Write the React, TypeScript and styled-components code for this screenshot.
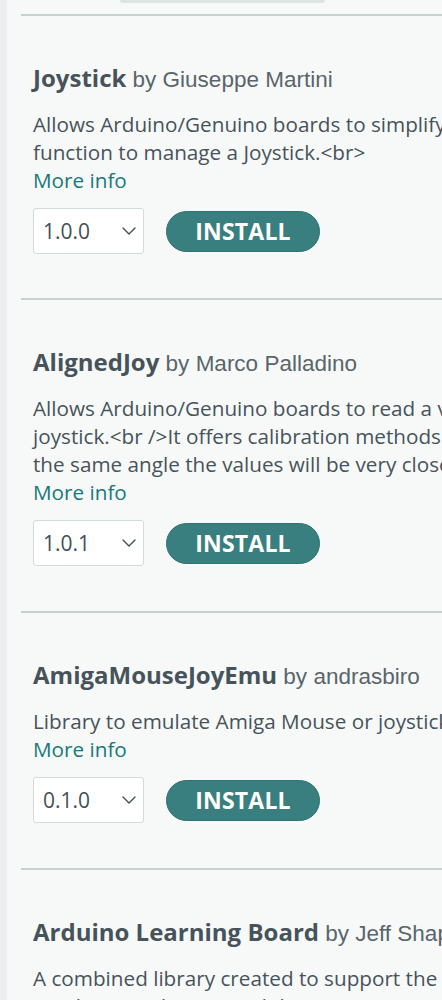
import React from "react";
import styled, { createGlobalStyle } from "styled-components";

const GlobalStyle = createGlobalStyle`
  html, body {
    margin: 0;
    padding: 0;
    background: #f7f9f9;
    overflow: hidden;
  }
  body {
    font-family: "Open Sans", "Liberation Sans", sans-serif;
    -webkit-font-smoothing: antialiased;
  }
`;

const Page = styled.div`
  display: flex;
  min-height: 1000px;
  width: 442px;
  overflow: hidden;
`;

const SideStrip = styled.div`
  width: 7px;
  flex: 0 0 7px;
  background: #ebeff0;
`;

const Main = styled.div`
  flex: 1;
  min-width: 0;
  padding-left: 14px;
  overflow: hidden;
`;

const TopArea = styled.div`
  height: 14px;
  padding-left: 99px;
`;

const TopStub = styled.div`
  width: 205px;
  height: 3px;
  background: #dde4e4;
  border-radius: 0 0 4px 4px;
`;

const Entry = styled.section<{ $extra?: number }>`
  border-top: 2px solid #c9d0d0;
  padding: 46px 0 ${(p) => 44 + (p.$extra ?? 0)}px 12px;
`;

const Title = styled.div`
  font-family: "Open Sans", sans-serif;
  font-weight: 700;
  font-size: 24px;
  line-height: 32px;
  color: #47535a;
  white-space: nowrap;
`;

const Author = styled.span`
  font-family: "Liberation Sans", Arial, sans-serif;
  font-weight: 400;
  font-size: 22.5px;
  line-height: 1;
  color: #59656a;
`;

const Description = styled.div`
  margin-top: 16px;
  font-family: "Open Sans", sans-serif;
  font-size: 20.7px;
  line-height: 28px;
  color: #47535a;
  white-space: nowrap;
`;

const DescLine = styled.span`
  display: block;
`;

const MoreInfo = styled.a`
  display: block;
  width: max-content;
  font-family: "Open Sans", sans-serif;
  font-size: 20.7px;
  line-height: 28px;
  color: #17797b;
  text-decoration: none;
  cursor: pointer;
`;

const Controls = styled.div`
  margin-top: 14px;
  display: flex;
  align-items: center;
  gap: 22px;
`;

const VersionSelect = styled.div`
  box-sizing: border-box;
  width: 111px;
  height: 46px;
  display: flex;
  align-items: center;
  justify-content: space-between;
  padding: 0 7px 0 9px;
  background: #ffffff;
  border: 1px solid #d4dbdb;
  border-radius: 3px;
  font-family: "Open Sans", sans-serif;
  font-size: 21px;
  color: #434f54;
`;

const Chevron = styled.svg`
  width: 14px;
  height: 8px;
  flex: 0 0 auto;
`;

const InstallButton = styled.button`
  box-sizing: border-box;
  width: 154px;
  height: 41px;
  border-radius: 21px;
  border: 1px solid #2e7273;
  background: #3a7f80;
  color: #ffffff;
  font-family: "Open Sans", sans-serif;
  font-weight: 700;
  font-size: 23px;
  letter-spacing: 0.2px;
  padding: 0;
  cursor: pointer;
`;

type Lib = {
  name: string;
  author: string;
  lines: string[];
  version: string;
  extra?: number;
};

const libs: Lib[] = [
  {
    name: "Joystick",
    author: "Giuseppe Martini",
    lines: [
      "Allows Arduino/Genuino boards to simplify the use of a joystick. A simple",
      "function to manage a Joystick.<br>",
    ],
    version: "1.0.0",
  },
  {
    name: "AlignedJoy",
    author: "Marco Palladino",
    lines: [
      "Allows Arduino/Genuino boards to read a value from a joystick",
      "joystick.<br />It offers calibration methods so that when moved to",
      "the same angle the values will be very close to each other.",
    ],
    version: "1.0.1",
    extra: 1,
  },
  {
    name: "AmigaMouseJoyEmu",
    author: "andrasbiro",
    lines: ["Library to emulate Amiga Mouse or joystick with an Arduino."],
    version: "0.1.0",
    extra: 1,
  },
  {
    name: "Arduino Learning Board",
    author: "Jeff Shapiro",
    lines: [
      "A combined library created to support the Arduino Learning Board.",
      "Display, I2C Shapes, and the 8 Digit LED Tones",
    ],
    version: "1.0.0",
  },
];

const ChevronIcon = () => (
  <Chevron viewBox="0 0 14 8" fill="none">
    <polyline
      points="1,1 7,7 13,1"
      stroke="#434f54"
      strokeWidth="1.4"
      strokeLinecap="round"
      strokeLinejoin="round"
    />
  </Chevron>
);

export default function App() {
  return (
    <>
      <GlobalStyle />
      <Page>
        <SideStrip />
        <Main>
          <TopArea>
            <TopStub />
          </TopArea>
          {libs.map((lib) => (
            <Entry key={lib.name} $extra={lib.extra}>
              <Title>
                {lib.name} <Author>by {lib.author}</Author>
              </Title>
              <Description>
                {lib.lines.map((l, i) => (
                  <DescLine key={i}>{l}</DescLine>
                ))}
              </Description>
              <MoreInfo>More info</MoreInfo>
              <Controls>
                <VersionSelect>
                  <span>{lib.version}</span>
                  <ChevronIcon />
                </VersionSelect>
                <InstallButton>INSTALL</InstallButton>
              </Controls>
            </Entry>
          ))}
        </Main>
      </Page>
    </>
  );
}
